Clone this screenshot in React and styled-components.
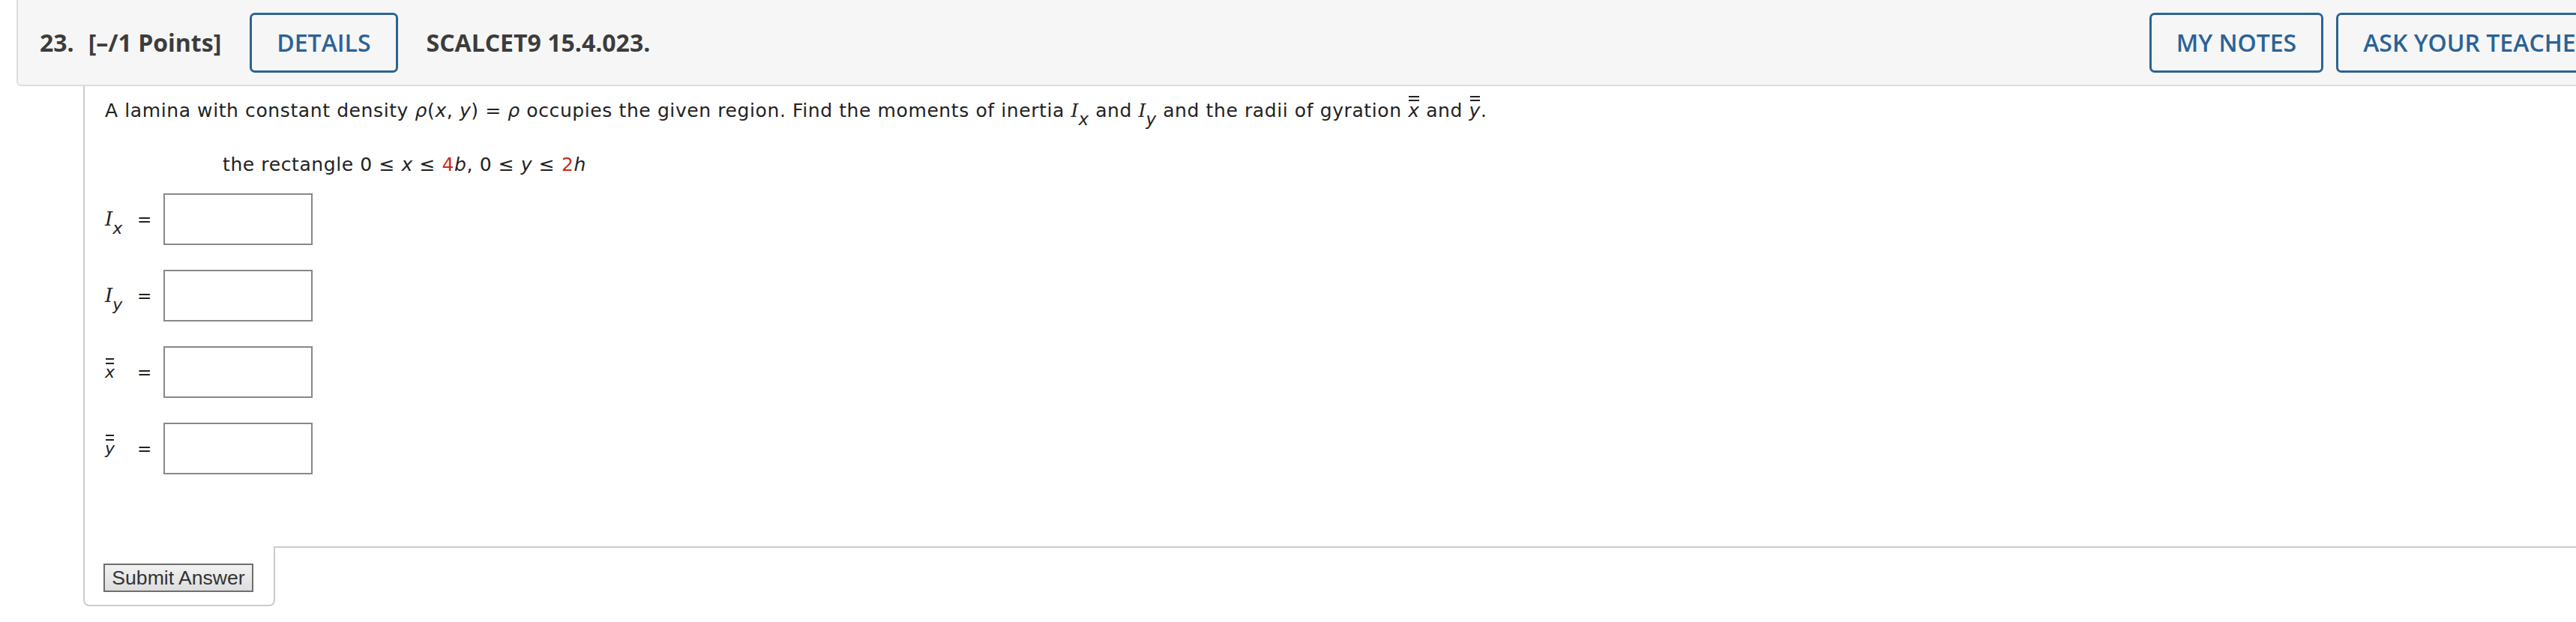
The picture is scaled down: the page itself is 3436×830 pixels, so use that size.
import React from "react";
import styled, { createGlobalStyle } from "styled-components";

const GlobalStyle = createGlobalStyle`
  html, body { margin: 0; padding: 0; overflow: hidden; background: #fff; }
  body { font-family: "DejaVu Sans", Verdana, sans-serif; color: #222; }
`;

const Page = styled.div`
  width: 3492px;
  padding-left: 22px;
`;

const Header = styled.div`
  display: flex;
  align-items: center;
  height: 113px;
  padding: 0 20px 0 29px;
  background: #f6f6f6;
  border: 2px solid #dddddd;
  border-top: none;
  border-radius: 0 0 6px 6px;
  font-family: "Open Sans", "Noto Sans", sans-serif;
  font-size: 32px;
  color: #3c3c3c;
`;

const HeadText = styled.span`
  font-weight: 700;
  margin-right: ${(p) => p.$gap || 0}px;
  white-space: nowrap;
`;

const OutlineButton = styled.button`
  font-family: "Open Sans", "Noto Sans", sans-serif;
  font-size: 32px;
  font-weight: 600;
  color: #2b6396;
  background: transparent;
  border: 3px solid #2b6396;
  border-radius: 7px;
  height: 80px;
  padding: 0 33px;
  margin-right: ${(p) => p.$gap || 0}px;
  white-space: nowrap;
  cursor: pointer;
`;

const Spacer = styled.div`
  flex: 1;
`;

const Body = styled.div`
  margin-left: 89px;
  border-left: 2px solid #cccccc;
  padding: 18px 0 96px 27px;
  font-size: 25px;
  letter-spacing: 0.6px;
  line-height: 30px;
`;

const Prompt = styled.p`
  margin: 0;
  white-space: nowrap;
`;

const Region = styled.p`
  margin: 42px 0 0 157px;
  white-space: nowrap;
`;

const Var = styled.i`
  font-style: italic;
`;

const BigI = styled.i`
  font-family: "DejaVu Serif", "Liberation Serif", serif;
  font-style: italic;
  font-size: ${(p) => p.$size || 25}px;
  letter-spacing: 0;
`;

const Sub = styled.sub`
  font-size: ${(p) => p.$size || 23}px;
  font-style: italic;
  vertical-align: -${(p) => p.$drop || 11}px;
  line-height: 0;
`;

const Red = styled.span`
  color: #cc2a22;
`;

const Bar = styled.span`
  position: relative;
  display: inline-block;
  font-style: italic;
  line-height: 1;
  &::before {
    content: "";
    position: absolute;
    left: 1px;
    right: 1px;
    top: ${(p) => p.$top || -7}px;
    height: ${(p) => p.$gap || 3}px;
    border-top: 2px solid #222;
    border-bottom: 2px solid #222;
  }
`;

const Rows = styled.div`
  display: flex;
  flex-direction: column;
  gap: 33px;
  margin-top: 23px;
`;

const Row = styled.div`
  display: flex;
  align-items: center;
`;

const Label = styled.div`
  width: 43px;
  white-space: nowrap;
  font-size: 22px;
  letter-spacing: 0;
`;

const Eq = styled.div`
  width: 35px;
  font-size: 23px;
  letter-spacing: 0;
`;

const AnswerBox = styled.input`
  box-sizing: border-box;
  width: 199px;
  height: 69px;
  border: 2px solid #888888;
  background: #fff;
  margin: 0;
  padding: 0 6px;
  font-size: 22px;
`;

const Footer = styled.div`
  display: flex;
  align-items: flex-start;
  margin-left: 89px;
`;

const SubmitArea = styled.div`
  box-sizing: border-box;
  width: 256px;
  height: 80px;
  padding: 23px 0 0 25px;
  border: 2px solid #cccccc;
  border-top: none;
  border-radius: 0 0 8px 8px;
`;

const FooterRest = styled.div`
  flex: 1;
  border-top: 2px solid #cccccc;
`;

const SubmitButton = styled.button`
  box-sizing: border-box;
  height: 38px;
  width: 200px;
  padding: 0;
  font-family: "Liberation Sans", Arial, sans-serif;
  font-size: 26.6px;
  line-height: 1;
  color: #333;
  background: linear-gradient(#f2f2f2, #dddddd);
  border: 2px solid #6e6e6e;
  border-radius: 0;
  cursor: pointer;
`;

export default function App() {
  const rows = [
    { key: "ix", label: <><BigI $size={26}>I</BigI><Sub $size={22} $drop={11}>x</Sub></> },
    { key: "iy", label: <><BigI $size={26}>I</BigI><Sub $size={22} $drop={11}>y</Sub></> },
    { key: "xb", label: <Bar $top={-8} $gap={4}>x</Bar> },
    { key: "yb", label: <Bar $top={-8} $gap={4}>y</Bar> },
  ];
  return (
    <Page>
      <GlobalStyle />
      <Header>
        <HeadText $gap={19}>23.</HeadText>
        <HeadText $gap={38}>[–/1 Points]</HeadText>
        <OutlineButton $gap={38}>DETAILS</OutlineButton>
        <HeadText>SCALCET9 15.4.023.</HeadText>
        <Spacer />
        <OutlineButton $gap={17}>MY NOTES</OutlineButton>
        <OutlineButton>ASK YOUR TEACHER</OutlineButton>
      </Header>
      <Body>
        <Prompt>
          A lamina with constant density <Var>ρ</Var>(<Var>x</Var>, <Var>y</Var>) = <Var>ρ</Var> occupies
          the given region. Find the moments of inertia <BigI>I</BigI><Sub>x</Sub> and{" "}
          <BigI>I</BigI><Sub>y</Sub> and the radii of gyration <Bar>x</Bar> and <Bar>y</Bar>.
        </Prompt>
        <Region>
          the rectangle 0 ≤ <Var>x</Var> ≤ <Red>4</Red><Var>b</Var>, 0 ≤ <Var>y</Var> ≤ <Red>2</Red><Var>h</Var>
        </Region>
        <Rows>
          {rows.map((r) => (
            <Row key={r.key}>
              <Label>{r.label}</Label>
              <Eq>=</Eq>
              <AnswerBox type="text" aria-label={r.key} />
            </Row>
          ))}
        </Rows>
      </Body>
      <Footer>
        <SubmitArea>
          <SubmitButton>Submit Answer</SubmitButton>
        </SubmitArea>
        <FooterRest />
      </Footer>
    </Page>
  );
}
